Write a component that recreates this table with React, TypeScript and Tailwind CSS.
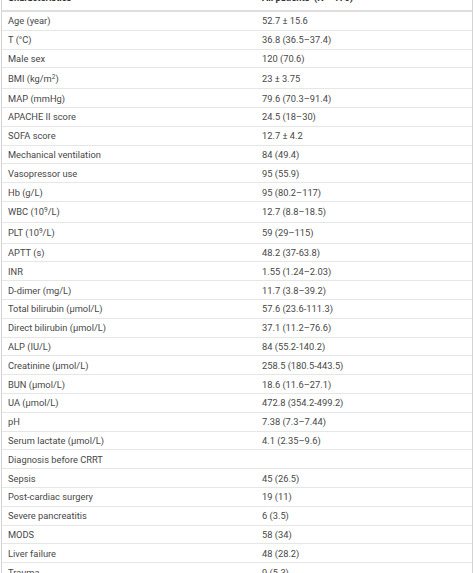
import React from "react";

type Row = { label: React.ReactNode; value: string; tall?: boolean };

const sup = (t: string) => <sup className="text-[6.5px]">{t}</sup>;

const rows: Row[] = [
  { label: "Age (year)", value: "52.7 ± 15.6" },
  { label: "T (°C)", value: "36.8 (36.5–37.4)" },
  { label: "Male sex", value: "120 (70.6)" },
  { label: <>BMI (kg/m{sup("2")})</>, value: "23 ± 3.75", tall: true },
  { label: "MAP (mmHg)", value: "79.6 (70.3–91.4)" },
  { label: "APACHE II score", value: "24.5 (18–30)" },
  { label: "SOFA score", value: "12.7 ± 4.2" },
  { label: "Mechanical ventilation", value: "84 (49.4)" },
  { label: "Vasopressor use", value: "95 (55.9)" },
  { label: "Hb (g/L)", value: "95 (80.2–117)" },
  { label: <>WBC (10{sup("9")}/L)</>, value: "12.7 (8.8–18.5)", tall: true },
  { label: <>PLT (10{sup("9")}/L)</>, value: "59 (29–115)", tall: true },
  { label: "APTT (s)", value: "48.2 (37-63.8)" },
  { label: "INR", value: "1.55 (1.24–2.03)" },
  { label: "D-dimer (mg/L)", value: "11.7 (3.8–39.2)" },
  { label: "Total bilirubin (μmol/L)", value: "57.6 (23.6-111.3)" },
  { label: "Direct bilirubin (μmol/L)", value: "37.1 (11.2–76.6)" },
  { label: "ALP (IU/L)", value: "84 (55.2-140.2)" },
  { label: "Creatinine (μmol/L)", value: "258.5 (180.5-443.5)" },
  { label: "BUN (μmol/L)", value: "18.6 (11.6–27.1)" },
  { label: "UA (μmol/L)", value: "472.8 (354.2-499.2)" },
  { label: "pH", value: "7.38 (7.3–7.44)" },
  { label: "Serum lactate (μmol/L)", value: "4.1 (2.35–9.6)" },
  { label: "Diagnosis before CRRT", value: "" },
  { label: "Sepsis", value: "45 (26.5)" },
  { label: "Post-cardiac surgery", value: "19 (11)" },
  { label: "Severe pancreatitis", value: "6 (3.5)" },
  { label: "MODS", value: "58 (34)" },
  { label: "Liver failure", value: "48 (28.2)" },
  { label: "Trauma", value: "9 (5.3)" },
];

export default function App() {
  return (
    <div
      className="w-[474px] h-[573px] overflow-hidden bg-white text-[#474747]"
      style={{ fontFamily: "Roboto, 'Liberation Sans', sans-serif" }}
    >
      <div className="ml-[1px] mr-[1px] -mt-[10px] border-l-[1.5px] border-r-[1.5px] border-[#d4d4d4] text-[9.3px] leading-[11px]">
        <div className="grid grid-cols-[260px_1fr] h-[22px] pt-[2px] border-b-2 border-[#dedede] font-bold text-[#333]">
          <div className="pl-[6px]">Characteristics</div>
          <div>All patients&nbsp;&nbsp;(N = 170)</div>
        </div>
        {rows.map((r, i) => (
          <div
            key={i}
            className={`grid grid-cols-[260px_1fr] items-center border-b border-[#e6e6e6] ${
              r.tall ? "h-[20.8px]" : "h-[18.8px]"
            }`}
          >
            <div className="pl-[6px]">{r.label}</div>
            <div>{r.value}</div>
          </div>
        ))}
      </div>
    </div>
  );
}
